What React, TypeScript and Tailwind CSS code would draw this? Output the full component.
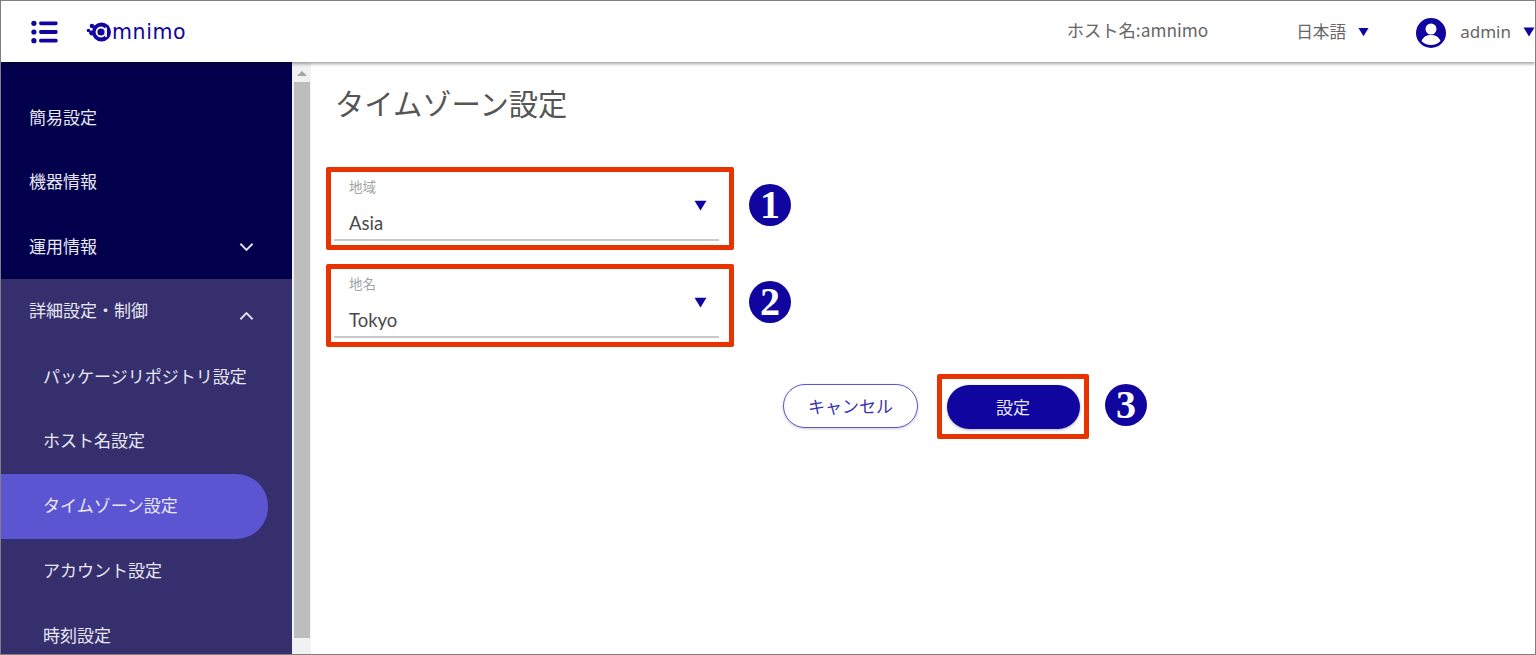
const jp = { fontFamily: '"Noto Sans CJK JP","Noto Sans",sans-serif' };

function Tri({ className = "" }: { className?: string }) {
  return (
    <svg viewBox="0 0 12 10" className={className}>
      <path d="M0.5 0.5H11.5L6 9.5Z" fill="#10069f" />
    </svg>
  );
}

function Chevron({ up }: { up?: boolean }) {
  return (
    <svg viewBox="0 0 16 10" className={`w-[15px] h-[10px] ${up ? "mt-[9px]" : "mt-[1px]"}`}>
      <path d={up ? "M1.5 8.5L8 2l6.5 6.5" : "M1.5 1.5L8 8l6.5-6.5"} fill="none" stroke="#e4e4ee" strokeWidth="2" />
    </svg>
  );
}

function NavItem({ label, sub, active, chevron, nudge }: { label: string; sub?: boolean; active?: boolean; chevron?: "up" | "down"; nudge?: boolean }) {
  return (
    <div
      className={`h-[64.7px] shrink-0 flex items-center justify-between ${sub ? "pl-[42px]" : "pl-[28px]"} text-[17px] pr-[36px] text-[#e8e8f2] ${active ? "bg-[#5c55d2] rounded-r-[32px] mr-[24px]" : chevron ? "pr-[38px]" : ""}`}
    >
      <span className={nudge ? "-mt-[3px]" : "-mt-[1px]"}>{label}</span>
      {chevron && <Chevron up={chevron === "up"} />}
    </div>
  );
}

function Field({ label, value }: { label: string; value: string }) {
  return (
    <div className="w-[408px] h-[83px] border-[5px] border-[#e83200] rounded-[2px] px-[3px] pt-[6px] relative bg-white">
      <div className="pl-[15px] text-[13.5px] leading-[16px] text-[#a0a4a4]">{label}</div>
      <div className="pl-[15px] mt-[17px] text-[18.5px] leading-[24px] text-[#4a4a4a]" style={{ fontFamily: '"Lato","Noto Sans",sans-serif' }}>{value}</div>
      <div className="mt-[4px] w-[385px] h-[1.5px] bg-[#c8caca]" />
      <Tri className="absolute right-[22px] top-[28px] w-[13px] h-[11px]" />
    </div>
  );
}

function Num({ n, className = "" }: { n: string; className?: string }) {
  return (
    <div className={`w-[42px] h-[42px] rounded-full bg-[#10069f] flex items-center justify-center text-white text-[40px] font-bold leading-none ${className}`} style={{ fontFamily: '"Liberation Serif",serif' }}>
      {n}
    </div>
  );
}

export default function App() {
  return (
    <div className="w-[1536px] h-[655px] overflow-hidden border border-[#7f7f7f] flex flex-col bg-white" style={jp}>
      <header className="h-[61px] shrink-0 flex items-center bg-white relative z-10 shadow-[0_2px_3px_rgba(0,0,0,0.35)] text-[#666]">
        <svg viewBox="0 0 28 24" className="ml-[30px] w-[27px] h-[24px]">
          <g fill="#10069f">
            <circle cx="3" cy="3" r="2.7" />
            <circle cx="3" cy="12" r="2.7" />
            <circle cx="3" cy="21" r="2.7" />
            <rect x="8.500" y="1" width="19" height="4" rx="1.500" />
            <rect x="8.500" y="10" width="19" height="4" rx="1.500" />
            <rect x="8.500" y="19" width="19" height="4" rx="1.500" />
          </g>
        </svg>
        <div className="ml-[28px] mt-[1px] flex items-center text-[#10069f]">
          <svg viewBox="0 0 26 22" className="w-[26px] h-[22px]">
            <circle cx="2.500" cy="9.500" r="1.800" fill="#10069f" />
            <circle cx="6" cy="5" r="2.300" fill="#10069f" />
            <circle cx="5.500" cy="12" r="2.400" fill="#10069f" />
            <circle cx="15.500" cy="11" r="9.500" fill="#10069f" />
            <circle cx="15" cy="11" r="4.500" fill="none" stroke="#fff" strokeWidth="1.800" />
            <path d="M20 6.500v9.500" stroke="#fff" strokeWidth="1.800" />
          </svg>
          <span className="text-[20.5px] leading-none tracking-[0.6px]" style={{ fontFamily: '"DejaVu Sans",sans-serif', fontWeight: 400 }}>mnimo</span>
          <span className="text-[6px] self-end mb-[3px] opacity-60">.</span>
        </div>
        <div className="ml-auto flex items-center">
          <span className="text-[17.300px] -mt-[3px]">ホスト名:amnimo</span>
          <span className="ml-[88px] text-[16.700px]">日本語</span>
          <Tri className="ml-[12px] w-[11px] h-[10px]" />
          <svg viewBox="0 0 30 30" className="ml-[47px] w-[30px] h-[30px] mt-[3px]">
            <circle cx="15" cy="15" r="15" fill="#10069f" />
            <circle cx="15" cy="11" r="5.500" fill="#fff" />
            <path d="M5.500 23c2-4.500 5.500-6 9.500-6s7.500 1.500 9.500 6c-2.300 2.500-5.700 4-9.500 4s-7.200-1.500-9.500-4z" fill="#fff" />
          </svg>
          <span className="ml-[14px] text-[17px]" style={{ fontFamily: '"Noto Sans",sans-serif' }}>admin</span>
          <Tri className="ml-[12px] w-[12px] h-[10px]" />
        </div>
      </header>
      <div className="flex-1 flex min-h-0">
        <nav className="w-[291px] shrink-0 flex flex-col overflow-hidden bg-[#352f6e]">
          <div className="bg-[#02004d] pt-[23px] h-[217px] shrink-0">
            <NavItem label="簡易設定" />
            <NavItem label="機器情報" nudge />
            <NavItem label="運用情報" chevron="down" />
          </div>
          <NavItem label="詳細設定・制御" chevron="up" nudge />
          <NavItem label="パッケージリポジトリ設定" sub />
          <NavItem label="ホスト名設定" sub />
          <div className="h-[1px] shrink-0" />
          <NavItem label="タイムゾーン設定" sub active nudge />
          <NavItem label="アカウント設定" sub nudge />
          <NavItem label="時刻設定" sub nudge />
        </nav>
        <div className="w-[19px] shrink-0 bg-[#f1f1f1] flex flex-col items-center">
          <div className="mt-[9px] w-0 h-0 border-x-[5px] border-x-transparent border-b-[5px] border-b-[#a3a3a3]" />
          <div className="mt-[6px] w-[16px] h-[556px] bg-[#bdbdbd]" />
        </div>
        <main className="flex-1 pl-[15px] relative">
          <h1 className="mt-[20px] ml-[9px] text-[29.3px] leading-[40px] font-normal text-[#555]">タイムゾーン設定</h1>
          <div className="mt-[45px] flex items-center gap-[15px]">
            <Field label="地域" value="Asia" />
            <Num n="1" className="-mt-[8px]" />
          </div>
          <div className="mt-[14px] flex items-center gap-[15px]">
            <Field label="地名" value="Tokyo" />
            <Num n="2" className="-mt-[8px]" />
          </div>
          <div className="mt-[27px] ml-[457px] flex items-center">
            <button className="w-[135px] h-[44px] -mt-[1px] rounded-full border border-[#5c55d2] text-[#3a32b0] text-[17px] bg-white shadow-[0_1px_3px_rgba(0,0,0,0.2)]">キャンセル</button>
            <div className="ml-[19px] w-[152px] h-[65px] border-[5px] border-[#e83200] rounded-[2px] flex items-center justify-center">
              <button className="w-[133px] h-[44px] rounded-full bg-[#10069f] text-[#e8e8f8] text-[17px] shadow-[0_1px_3px_rgba(0,0,0,0.3)]">設定</button>
            </div>
            <Num n="3" className="ml-[16px] -mt-[4px]" />
          </div>
        </main>
      </div>
    </div>
  );
}
